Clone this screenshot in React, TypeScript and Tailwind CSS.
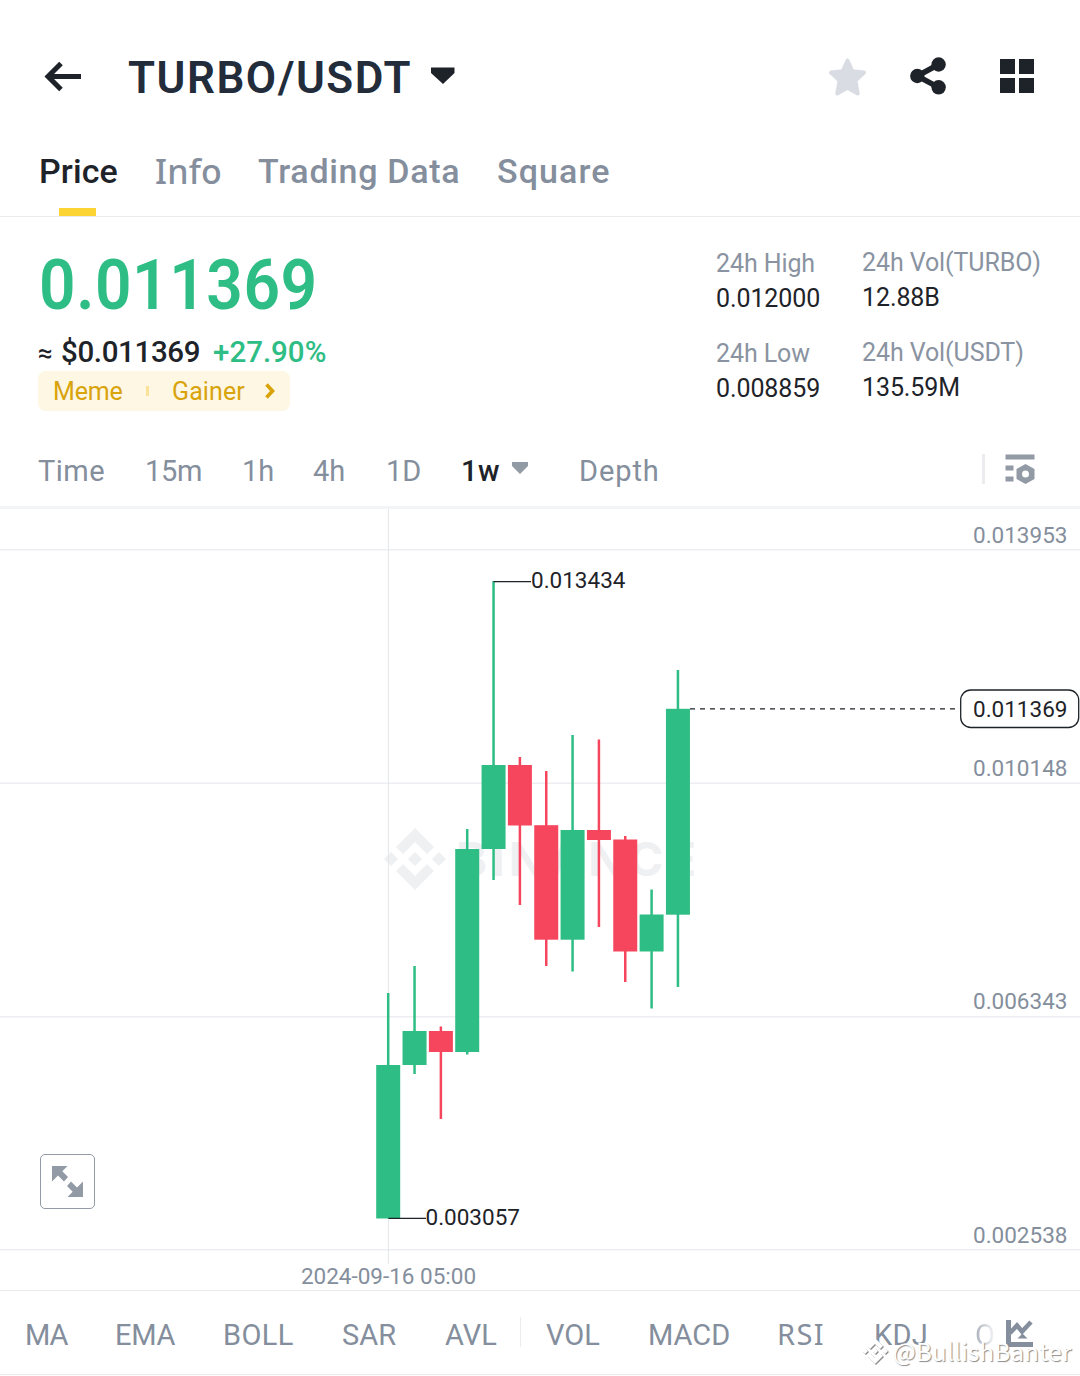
import React from 'react';

interface Candle {
  open: number;
  close: number;
  high: number;
  low: number;
  up: boolean;
}

// y positions inside the chart, top to bottom
const candles: Candle[] = [
  { open: 1065, close: 1218.5, high: 993, low: 1218.5, up: true },
  { open: 1031, close: 1065, high: 966, low: 1074, up: true },
  { open: 1031, close: 1052, high: 1026.5, low: 1119, up: false },
  { open: 849, close: 1052, high: 829, low: 1054.5, up: true },
  { open: 765, close: 849, high: 581, low: 880, up: true },
  { open: 765, close: 825.5, high: 757, low: 905, up: false },
  { open: 825.2, close: 939.7, high: 771, low: 966, up: false },
  { open: 830, close: 939.7, high: 735, low: 971.5, up: true },
  { open: 830, close: 840, high: 739.5, low: 927, up: false },
  { open: 839.5, close: 951.5, high: 836, low: 982, up: false },
  { open: 914.5, close: 951.5, high: 889.5, low: 1008.5, up: true },
  { open: 708.8, close: 914.7, high: 670, low: 987, up: true },
];

const gridLines = [
  { y: 549.8, labelY: 543, label: '0.013953' },
  { y: 783.3, labelY: 776, label: '0.010148' },
  { y: 1016.8, labelY: 1009, label: '0.006343' },
  { y: 1249.8, labelY: 1243, label: '0.002538' },
];

const tabs = [
  { label: 'Price', className: 'w-[116px] text-[#1e2329] tracking-[0.1px]' },
  { label: 'Info', className: "w-[103px] tracking-[0.2px] font-['Noto_Sans',sans-serif]" },
  { label: 'Trading Data', className: 'w-[239px] tracking-[0.7px]' },
  { label: 'Square', className: 'tracking-[1.1px]' },
];

const intervals = [
  { label: 'Time', className: 'w-[107px] tracking-[0.5px]' },
  { label: '15m', className: 'w-[97px] tracking-[-0.3px]' },
  { label: '1h', className: 'w-[71px]' },
  { label: '4h', className: 'w-[73px]' },
  { label: '1D', className: 'w-[75px]' },
];

const mainIndicators = [
  { label: 'MA', className: 'w-[90px] tracking-[-1px]' },
  { label: 'EMA', className: 'w-[108px] tracking-[-0.3px]' },
  { label: 'BOLL', className: 'w-[119px] tracking-[0.4px]' },
  { label: 'SAR', className: 'w-[103px]' },
  { label: 'AVL', className: 'w-[75px]' },
];

const subIndicators = [
  { label: 'VOL', className: 'w-[102px]' },
  { label: 'MACD', className: 'w-[129px]' },
  { label: 'RSI', className: "w-[97px] tracking-[1.4px] font-['Noto_Sans',sans-serif] -mt-px" },
  { label: 'KDJ', className: 'w-[101px] tracking-[0.3px]' },
];

const Header: React.FC = () => (
  <header className="flex h-[154px] items-center pl-[44px] pr-[46px]">
    <svg width="38" height="32" viewBox="0 0 38 32" fill="none" stroke="#1e2329" strokeWidth="5">
      <path d="M17 2.5 4 15.5 17 28.5M4 15.5H37" />
    </svg>
    <h1 className="ml-[46px] mt-px w-[303px] whitespace-nowrap text-[44px] font-semibold leading-none tracking-[1.5px] text-[#232c3b]">TURBO/USDT</h1>
    <svg className="-mt-[3px]" width="24" height="18" viewBox="0 0 24 18" fill="#1e2329">
      <path d="M0 0.5H23.5V6L12 17 0 6Z" />
    </svg>
    <div className="ml-auto flex items-center">
      <svg className="-mt-px" width="38" height="38" viewBox="0 0 38 38" fill="#d9dce2" stroke="#d9dce2" strokeWidth="4" strokeLinejoin="round">
        <path d="M18.5 2.5 23.3 13.2 35 14.6 26.5 22.6 28.7 35.5 18.5 29.8 8.3 35.5 10.5 22.6 2 14.6 13.7 13.2Z" />
      </svg>
      <svg className="-mt-[2px] ml-[43px]" width="36" height="38" viewBox="0 0 36 38" fill="#1e2329">
        <path d="M28.5 7.5 7.3 19 28.5 30.4" fill="none" stroke="#1e2329" strokeWidth="5.5" />
        <circle cx="7.3" cy="19" r="7.2" />
        <circle cx="28.6" cy="7.5" r="7.2" />
        <circle cx="28.6" cy="30.3" r="7.2" />
      </svg>
      <div className="-mt-[3px] ml-[54px] grid grid-cols-2 gap-1">
        {[0, 1, 2, 3].map(i => (
          <span key={i} className="size-[15px] bg-[#1e2329]" />
        ))}
      </div>
    </div>
  </header>
);

const Stat: React.FC<{ label: string; value: string }> = ({ label, value }) => (
  <div className="h-[90px] whitespace-nowrap text-[25px] leading-[35px] tracking-[-0.1px]">
    <div className="text-[#8a93a1]">{label}</div>
    <div className="text-[#1e2329]">{value}</div>
  </div>
);

const Chart: React.FC = () => (
  <section className="relative border-b border-[#eaecef]">
    <svg className="block" width="1080" height="784" viewBox="0 506 1080 784" fontSize="22.5">
      <rect x="0" y="506" width="1080" height="3" fill="#f3f4f6" />
      <g fill="#eff0f2">
        <path d="M415 828 434 847 427 854 415 842 403 854 396 847Z" />
        <path d="M415 890 434 871 427 864 415 876 403 864 396 871Z" />
        <path d="M415 852 422 859 415 866 408 859Z" />
        <path d="M391 852 398 859 391 866 384 859Z" />
        <path d="M439 852 446 859 439 866 432 859Z" />
        <text x="456" y="876" fontSize="47" fontWeight="700" fontFamily="Inter, sans-serif" textLength="240">BINANCE</text>
      </g>
      <g stroke="#eceef1" strokeWidth="1.5">
        {gridLines.map(line => (
          <line key={line.y} x1="0" x2="1080" y1={line.y} y2={line.y} />
        ))}
        <line x1="388.4" x2="388.4" y1="509" y2="1264" strokeWidth="1" stroke="#e4e6ea" />
      </g>
      {candles.map((c, i) => {
        const x = 388.2 + i * 26.34;
        return (
          <g key={i} fill={c.up ? '#2ebd85' : '#f6465d'}>
            <rect x={x - 1.25} y={c.high} width="2.5" height={c.low - c.high} />
            <rect x={x - 12} y={c.open} width="24" height={c.close - c.open} />
          </g>
        );
      })}
      <g stroke="#1e2329" strokeWidth="1.3" fill="none">
        <path d="M493.5 581.6H531M388.5 1218.3H426" />
        <path d="M690 708.8H957" strokeDasharray="5 5" />
        <rect x="960.7" y="690" width="118" height="37.5" rx="10" fill="#fff" />
      </g>
      <g fill="#1e2329">
        <text x="531" y="588">0.013434</text>
        <text x="425.5" y="1225">0.003057</text>
        <text x="973" y="717">0.011369</text>
      </g>
      <g fill="#848e9c">
        {gridLines.map(line => (
          <text key={line.label} x="973" y={line.labelY}>{line.label}</text>
        ))}
        <text x="388.5" y="1284" textAnchor="middle">2024-09-16 05:00</text>
      </g>
    </svg>
    <button className="absolute bottom-[81px] left-[40px] flex size-[55px] items-center justify-center rounded-[5px] border-[1.5px] border-[#929aa5] bg-white">
      <svg width="31" height="31" viewBox="0 0 31 31" fill="#929aa5">
        <path d="M0 0H15.5L10.3 5.2 16 11 12 15.5 6 9.5 0 15.5Z" />
        <path d="M31 31H15.5L20.7 25.8 15 20 19 15.5 25 21.5 31 15.5Z" />
      </svg>
    </button>
  </section>
);

const App: React.FC = () => {
  return (
    <div className="relative h-[1376px] w-[1080px] overflow-hidden bg-white font-[Roboto,sans-serif]">
      <Header />

      <nav className="relative flex h-[63px] border-b border-[#eaecef] pl-[39px] text-[34px] font-medium leading-[34px] text-[#848e9c]">
        {tabs.map(tab => (
          <span key={tab.label} className={`shrink-0 whitespace-nowrap ${tab.className}`}>{tab.label}</span>
        ))}
        <span className="absolute bottom-0 left-[59px] h-2 w-[37px] bg-[#fcd535]" />
      </nav>

      <section className="flex h-[224px] justify-between pl-[38px]">
        <div className="pt-[32px]">
          <div className="ml-px w-[252px] origin-left scale-x-[0.915] whitespace-nowrap text-[70px] font-semibold leading-[72px] tracking-[0.6px] text-[#2ebd85]">0.011369</div>
          <div className="mt-[13px] flex h-[37px] items-center whitespace-nowrap text-[29.5px] font-medium leading-none text-[#1e2329]">
            <span className="w-[23px] text-[26px]">≈</span>
            <span className="w-[152px] tracking-[-0.35px]">$0.011369</span>
            <span className="text-[#2ebd85]">+27.90%</span>
          </div>
          <div className="flex h-10 w-[252px] items-center rounded-lg bg-[#fdf7e3] pl-[15px] text-[25px] leading-none text-[#d9a30c]">
            <span className="w-[93px] tracking-[-0.2px]">Meme</span>
            <span className="mr-[23px] h-2.5 w-[3px] bg-[#fbe29a]" />
            <span className="w-[93px] tracking-[0.1px]">Gainer</span>
            <svg width="10" height="16" viewBox="0 0 10 16" fill="none" stroke="#d9a30c" strokeWidth="3.6">
              <path d="M1.5 1.5 7.5 8 1.5 14.5" />
            </svg>
          </div>
        </div>
        <div className="flex pt-[29px]">
          <div className="w-[146px]">
            <Stat label="24h High" value="0.012000" />
            <Stat label="24h Low" value="0.008859" />
          </div>
          <div className="-mt-px w-[218px]">
            <Stat label="24h Vol(TURBO)" value="12.88B" />
            <Stat label="24h Vol(USDT)" value="135.59M" />
          </div>
        </div>
      </section>

      <div className="flex h-[65px] items-start pl-[38px] pr-[44px] pt-[15px] text-[29px] leading-[30px] text-[#848e9c]">
        {intervals.map(item => (
          <span key={item.label} className={`shrink-0 ${item.className}`}>{item.label}</span>
        ))}
        <span className="w-[51px] font-medium tracking-[0.5px] text-[#1e2329]">1w</span>
        <svg className="mt-1.5" width="16" height="12" viewBox="0 0 16 12" fill="#929aa5">
          <path d="M0 0H16V4L8 12 0 4Z" />
        </svg>
        <span className="ml-[51px] tracking-[0.9px]">Depth</span>
        <span className="-mt-[2px] ml-auto h-[30px] w-[3px] bg-[#eaecef]" />
        <svg className="-mt-[2px] ml-[20px]" width="31" height="31" viewBox="0 0 31 31" fill="#929aa5">
          <path d="M0.5 0.5H29.5V5.5H0.5ZM0.5 11.5H8.5V16.5H0.5ZM0.5 22.5H8.5V27.5H0.5Z" />
          <path fillRule="evenodd" d="M20.5 10 29.5 15V25L20.5 30 11.5 25V15ZM20.5 16.5A3.5 3.5 0 1 0 20.5 23.5 3.5 3.5 0 1 0 20.5 16.5Z" />
        </svg>
      </div>

      <Chart />

      <footer className="flex h-[84px] items-start border-b border-[#eaecef] pl-[25px] pt-[29px] text-[29px] leading-[30px] text-[#848e9c]">
        {mainIndicators.map(item => (
          <span key={item.label} className={`shrink-0 ${item.className}`}>{item.label}</span>
        ))}
        <span className="-mt-[3px] mr-[25px] h-[30px] w-px shrink-0 bg-[#eaecef]" />
        {subIndicators.map(item => (
          <span key={item.label} className={`shrink-0 ${item.className}`}>{item.label}</span>
        ))}
        <span className="w-[31px] shrink-0 bg-linear-to-r from-[#a9b0ba] to-[#f1f2f4] to-60% bg-clip-text text-transparent">O</span>
        <svg width="28" height="28" viewBox="0 0 28 28" fill="#848e9c">
          <path d="M0 0H5V22H27V27H0Z" />
          <path d="M4 13 11 5.500 16 11.500 25 2" fill="none" stroke="#848e9c" strokeWidth="4.5" />
          <path d="M16.500 13.500 21.500 18.500H11.500Z" />
        </svg>
      </footer>

      <div className="absolute bottom-[10px] left-[861px] flex items-center gap-1 whitespace-nowrap font-['Noto_Sans_CJK_SC',sans-serif] text-[24px] leading-[30px] tracking-[0.3px] text-white [text-shadow:1px_1px_1px_#8a8a8a]">
        <svg className="drop-shadow-[1px_1px_0.5px_#8a8a8a]" width="28" height="28" viewBox="0 0 28 28" fill="#fff">
          <path d="M14 1 22 9 19 12 14 7 9 12 6 9ZM14 27 22 19 19 16 14 21 9 16 6 19ZM14 11 17 14 14 17 11 14ZM4 11 7 14 4 17 1 14ZM24 11 27 14 24 17 21 14Z" />
        </svg>
        <span>@BullishBanter</span>
      </div>
    </div>
  );
};

export default App;
